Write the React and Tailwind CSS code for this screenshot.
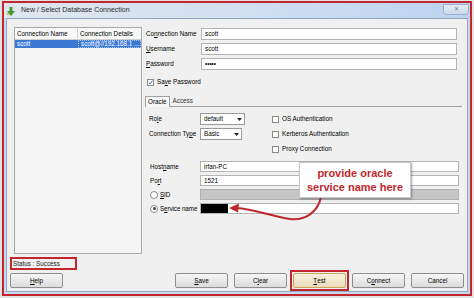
import React from "react";

const U = ({ children }) => <span className="underline">{children}</span>;

function Input({ className = "", children }) {
  return (
    <div className={"h-full bg-white border border-[#b4b4b4] flex items-center px-[3px] " + className}>
      {children}
    </div>
  );
}

function Btn({ children, className = "" }) {
  return (
    <div
      className={
        "w-[53px] h-[15px] rounded-[2px] border border-[#8e8e8e] bg-gradient-to-b from-[#f6f6f6] to-[#dcdcdc] flex items-center justify-center " +
        className
      }
    >
      {children}
    </div>
  );
}

function Check({ checked, children }) {
  return (
    <div className="flex items-center h-[12px] gap-[3px] whitespace-nowrap">
      <div className="w-[7px] h-[7px] border border-[#8a8a8a] bg-white flex items-center justify-center">
        {checked && (
          <svg width="7" height="7" viewBox="0 0 7 7">
            <path d="M1 3.5 L3 5.5 L6.2 1" stroke="#2a4f9a" strokeWidth="1.3" fill="none" />
          </svg>
        )}
      </div>
      <span>{children}</span>
    </div>
  );
}

function Radio({ checked, children }) {
  return (
    <div className="flex items-center gap-[2px] whitespace-nowrap">
      <div className="shrink-0 w-[8px] h-[8px] rounded-full border border-[#8a8a8a] bg-white flex items-center justify-center">
        {checked && <div className="w-[3px] h-[3px] rounded-full bg-[#444]" />}
      </div>
      <span className="tracking-[-0.1px]">{children}</span>
    </div>
  );
}

function Select({ value, w }) {
  return (
    <div className={"h-[12px] border border-[#9a9a9a] bg-white flex items-center justify-between pl-[3px] pr-[2px] " + w}>
      <span>{value}</span>
      <svg width="5" height="3" viewBox="0 0 5 3">
        <path d="M0 0 L5 0 L2.5 3 Z" fill="#222" />
      </svg>
    </div>
  );
}

export default function App() {
  return (
    <div
      className="relative w-[474px] h-[298px] bg-[#e2e2e2] pt-[1px] px-[2px] pb-[2px] text-[6.3px] text-black whitespace-nowrap"
      style={{ fontFamily: '"Liberation Sans", Arial, sans-serif' }}
    >
      <div className="h-full border-2 border-[#c4262e] bg-[#c9d9ed] flex flex-col">
        {/* title bar */}
        <div className="h-[15px] flex items-center pl-[3px] pr-[1px] bg-gradient-to-r from-[#dfe6ef] via-[#d2e0f1] to-[#bcd3ef] shrink-0">
          <svg width="8" height="9" viewBox="0 0 8 9" className="mr-[6px] mt-[2px]">
            <rect x="2.5" y="0" width="3" height="4" fill="#3d9a2e" />
            <path d="M0 4 L8 4 L4 9 Z" fill="#3d9a2e" />
            <rect x="0" y="6" width="2" height="2" fill="#d8b52a" />
          </svg>
          <span className="text-[7px] text-[#2a2a2a]">New / Select Database Connection</span>
          <div className="flex-1" />
          <div className="w-[26px] h-[11px] -mt-[3px] rounded-b-[3px] border border-[#9fb2cb] bg-gradient-to-b from-[#e4ecf6] to-[#cbd9ea] flex items-center justify-center text-[6px] text-[#6b7b90]">
            ✕
          </div>
        </div>

        {/* body */}
        <div className="flex-1 flex px-[2px] pb-[2px]">
          <div className="flex-1 bg-[#f0f0f0] border border-[#90a6c2] flex flex-col px-[3px] pt-[8px] pb-[1px]">
            {/* main */}
            <div className="h-[227px] flex pl-[4px] gap-[3px]">
              {/* list */}
              <div className="w-[128px] h-full border border-[#a9a9a9] bg-[#f5f5f5] flex flex-col">
                <div className="h-[12px] flex border-b border-[#d0d0d0] bg-[#f7f7f7]">
                  <div className="w-[63px] pl-[2px] flex items-center border-r border-[#d0d0d0]">Connection Name</div>
                  <div className="flex-1 pl-[2px] flex items-center">Connection Details</div>
                </div>
                <div className="h-[8px] flex bg-[#3a78d4] text-white">
                  <div className="w-[63px] pl-[2px] flex items-center">scott</div>
                  <div className="flex-1 pl-[2px] flex items-center overflow-hidden whitespace-nowrap border border-dotted border-[#a9c6f0]">
                    scott@//192.168.1 ...
                  </div>
                </div>
              </div>

              {/* form */}
              <div className="w-[317px] flex flex-col">
                <div className="h-[12px] mt-[1px] flex items-center">
                  <span className="w-[56px] pl-[1px]">Co<U>n</U>nection Name</span>
                  <div className="w-[256px] h-full"><Input>scott</Input></div>
                </div>
                <div className="h-[12px] mt-[3px] flex items-center">
                  <span className="w-[56px] pl-[1px]"><U>U</U>sername</span>
                  <div className="w-[256px] h-full"><Input>scott</Input></div>
                </div>
                <div className="h-[12px] mt-[3px] flex items-center">
                  <span className="w-[56px] pl-[1px]"><U>P</U>assword</span>
                  <div className="w-[256px] h-full"><Input>•••••</Input></div>
                </div>
                <div className="mt-[6px] pl-[2px]">
                  <Check checked>Sa<U>v</U>e Password</Check>
                </div>

                {/* tabs */}
                <div className="mt-[8px] flex items-end h-[11px]">
                  <div className="h-full px-[2px] border border-b-0 border-[#a0a0a0] bg-[#f7f7f7] flex items-center">Oracle</div>
                  <div className="flex-1 h-full border-b border-[#a0a0a0] flex items-center pl-[3px] text-[#333]">Access</div>
                </div>
                <div className="flex-1 flex flex-col pl-[4px] pr-[3px]">
                  <div className="mt-[6px] flex">
                    <div className="w-[123px] flex flex-col gap-[3px]">
                      <div className="h-[12px] flex items-center">
                        <span className="w-[51px]">Ro<U>l</U>e</span>
                        <Select value="default" w="w-[45px]" />
                      </div>
                      <div className="h-[12px] flex items-center">
                        <span className="w-[51px]">Connection Ty<U>p</U>e</span>
                        <Select value="Basic" w="w-[42px]" />
                      </div>
                    </div>
                    <div className="flex flex-col gap-[3px]">
                      <Check>OS Authentication</Check>
                      <Check>Kerberos Authentication</Check>
                      <Check>Proxy Connection</Check>
                    </div>
                  </div>

                  <div className="mt-[6px] flex flex-col gap-[3px]">
                    <div className="h-[11px] flex items-center">
                      <span className="w-[51px] pl-[1px]">Host<U>n</U>ame</span>
                      <div className="w-[259px] h-full"><Input>irfan-PC</Input></div>
                    </div>
                    <div className="h-[11px] flex items-center">
                      <span className="w-[51px] pl-[1px]">Po<U>r</U>t</span>
                      <div className="w-[259px] h-full"><Input>1521</Input></div>
                    </div>
                    <div className="h-[11px] flex items-center">
                      <div className="w-[51px] pl-[1px]"><Radio><U>S</U>ID</Radio></div>
                      <div className="w-[259px] h-full bg-[#c6c6c6] border border-[#b0b0b0]" />
                    </div>
                    <div className="h-[11px] flex items-center">
                      <div className="w-[51px] pl-[1px]"><Radio checked>S<U>e</U>rvice name</Radio></div>
                      <div className="w-[259px] h-full bg-white border border-[#b4b4b4] flex">
                        <div className="w-[27px] h-full bg-black" />
                      </div>
                    </div>
                  </div>
                </div>
              </div>
            </div>

            {/* status */}
            <div className="mt-[3px] w-[67px] h-[13px] border-2 border-[#c4262e] flex items-center pl-[1px] text-[#222]">
              Status : Success
            </div>

            {/* buttons */}
            <div className="mt-[3px] flex items-center">
              <Btn><U>H</U>elp</Btn>
              <div className="flex-1" />
              <div className="flex gap-[6px]">
                <Btn><U>S</U>ave</Btn>
                <Btn>C<U>l</U>ear</Btn>
                <div className="relative">
                  <Btn className="border-[#c8a75c] from-[#f8f1e0] to-[#ecdcb8]"><U>T</U>est</Btn>
                  <div className="absolute -inset-[3px] border-2 border-[#c4262e]" />
                </div>
                <Btn>C<U>o</U>nnect</Btn>
                <Btn>Cancel</Btn>
              </div>
            </div>
          </div>
        </div>
      </div>

      {/* callout annotation */}
      <svg className="absolute left-0 top-0" width="474" height="298" viewBox="0 0 474 298">
        <path
          d="M321 197 C 318 212, 305 221, 290 219 C 270 216, 255 209, 236 208"
          stroke="#c0272d"
          strokeWidth="2"
          fill="none"
        />
        <path d="M229 208 L239 203.5 L238 212.5 Z" fill="#c0272d" />
      </svg>
      <div
        className="absolute left-[299px] top-[162px] w-[112px] h-[36px] bg-white border border-[#c8c8c8] shadow-[1px_1px_2px_rgba(0,0,0,0.35)] flex flex-col items-center justify-center text-[11px] font-bold leading-[14px] text-[#c0272d]"
      >
        <span>provide oracle</span>
        <span>service name here</span>
      </div>
    </div>
  );
}
